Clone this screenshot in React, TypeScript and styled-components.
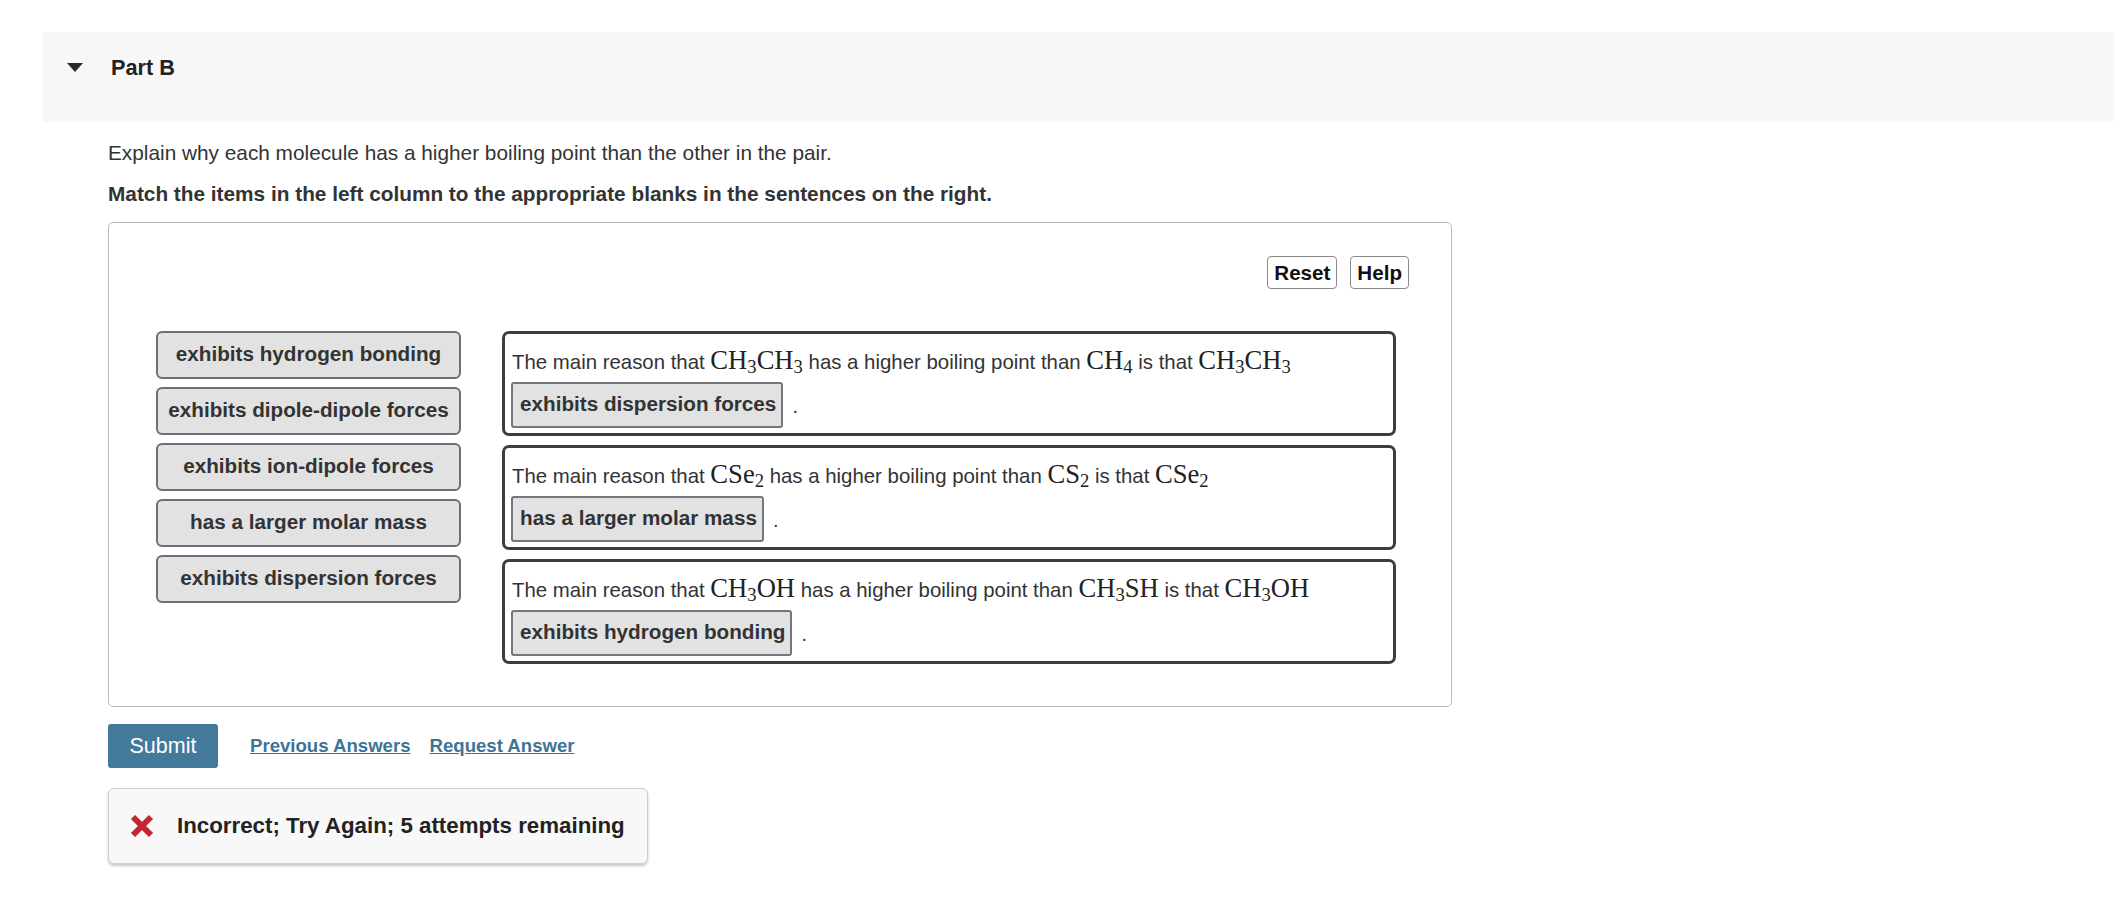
import React from "react";
import styled, { createGlobalStyle } from "styled-components";

const Global = createGlobalStyle`
  html, body { margin: 0; padding: 0; background: #fff; }
  body { font-family: "Liberation Sans", Arial, sans-serif; color: #333; }
`;

const Page = styled.div`
  padding: 32px 0 40px 43px;
`;

const PartHeader = styled.div`
  height: 90px;
  background: #f7f7f7;
  display: flex;
  align-items: flex-start;
  padding-top: 24px;
  box-sizing: border-box;
`;

const Caret = styled.span`
  display: flex;
  align-items: center;
  height: 24px;
  margin-left: 24px;
  width: 44px;
`;

const PartTitle = styled.h2`
  margin: 0;
  font-size: 21.7px;
  line-height: 24px;
  font-weight: 700;
  color: #222;
`;

const Body = styled.div`
  padding-left: 65px;
`;

const Prompt = styled.p<{ $bold?: boolean }>`
  margin: ${(p) => (p.$bold ? "17px 0 0" : "19px 0 0")};
  font-size: 20.8px;
  line-height: 24px;
  font-weight: ${(p) => (p.$bold ? 700 : 400)};
  color: #333;
`;

const MatchBox = styled.div`
  margin-top: 16px;
  width: 1344px;
  box-sizing: border-box;
  border: 1px solid #b9b9b9;
  border-radius: 5px;
  padding: 33px 42px 42px 47px;
`;

const ToolRow = styled.div`
  display: flex;
  justify-content: flex-end;
  gap: 13px;
`;

const ToolButton = styled.button`
  height: 33px;
  padding: 0 6px;
  background: #fff;
  border: 1px solid #8a8a8a;
  border-radius: 4px;
  font-family: "Liberation Sans", Arial, sans-serif;
  font-size: 20.6px;
  font-weight: 700;
  color: #111;
`;

const Columns = styled.div`
  margin-top: 42px;
  display: flex;
  gap: 41px;
  align-items: flex-start;
`;

const Choices = styled.div`
  width: 305px;
  display: flex;
  flex-direction: column;
  gap: 8px;
`;

const Choice = styled.div`
  height: 48px;
  box-sizing: border-box;
  border: 2px solid #6e6e78;
  border-radius: 6px;
  background: #e2e2e2;
  display: flex;
  align-items: center;
  justify-content: center;
  font-size: 20.7px;
  font-weight: 700;
  color: #333;
  padding-bottom: 2px;
  white-space: nowrap;
`;

const Sentences = styled.div`
  width: 894px;
  display: flex;
  flex-direction: column;
  gap: 9px;
`;

const Sentence = styled.div`
  box-sizing: border-box;
  height: 105px;
  border: 3px solid #3b3d40;
  border-radius: 7px;
  padding: 6px 8px 6px 6px;
`;

const SentenceText = styled.div`
  height: 42px;
  line-height: 40px;
  font-size: 20.4px;
  color: #333;
  padding-left: 1px;
  white-space: nowrap;
`;

const Math = styled.span`
  font-family: "Liberation Serif", "Times New Roman", serif;
  font-size: 26.6px;
  color: #222;
`;

const Sub = styled.sub`
  font-size: 0.7em;
  vertical-align: -0.24em;
  line-height: 0;
`;

const BlankRow = styled.div`
  display: flex;
  align-items: center;
  gap: 9px;
  font-size: 20px;
`;

const Blank = styled.div`
  height: 46px;
  box-sizing: border-box;
  border: 2px solid #75757d;
  border-radius: 3px;
  background: #e2e2e2;
  display: flex;
  align-items: center;
  padding: 0 5px 2px 7px;
  font-size: 20.7px;
  font-weight: 700;
  color: #333;
  white-space: nowrap;
`;

const Period = styled.span`
  color: #333;
  padding-top: 2px;
`;

const ActionRow = styled.div`
  margin-top: 17px;
  display: flex;
  align-items: center;
`;

const SubmitButton = styled.button`
  width: 110px;
  height: 44px;
  border: none;
  border-radius: 3px;
  background: #437a9b;
  color: #fff;
  font-family: "Liberation Sans", Arial, sans-serif;
  font-size: 21.5px;
  margin-right: 32px;
`;

const TextLink = styled.a<{ $gap?: number }>`
  font-size: 18.6px;
  font-weight: 700;
  color: #3d7496;
  text-decoration: underline;
  margin-right: ${(p) => p.$gap ?? 0}px;
  cursor: pointer;
`;

const Feedback = styled.div`
  margin-top: 20px;
  width: 540px;
  height: 76px;
  box-sizing: border-box;
  border: 1px solid #cfcfcf;
  border-radius: 6px;
  background: #f8f8f8;
  box-shadow: 0 2px 3px rgba(0, 0, 0, 0.22);
  display: flex;
  align-items: center;
  padding-left: 21px;
  gap: 23px;
`;

const FeedbackText = styled.span`
  font-size: 22.3px;
  font-weight: 700;
  color: #222;
`;

const C = ({ children }: { children: React.ReactNode }) => <Math>{children}</Math>;

const choices = [
  "exhibits hydrogen bonding",
  "exhibits dipole-dipole forces",
  "exhibits ion-dipole forces",
  "has a larger molar mass",
  "exhibits dispersion forces",
];

const sentences: { a: React.ReactNode; b: React.ReactNode; answer: string }[] = [
  {
    a: (
      <C>
        CH<Sub>3</Sub>CH<Sub>3</Sub>
      </C>
    ),
    b: (
      <C>
        CH<Sub>4</Sub>
      </C>
    ),
    answer: "exhibits dispersion forces",
  },
  {
    a: (
      <C>
        CSe<Sub>2</Sub>
      </C>
    ),
    b: (
      <C>
        CS<Sub>2</Sub>
      </C>
    ),
    answer: "has a larger molar mass",
  },
  {
    a: (
      <C>
        CH<Sub>3</Sub>OH
      </C>
    ),
    b: (
      <C>
        CH<Sub>3</Sub>SH
      </C>
    ),
    answer: "exhibits hydrogen bonding",
  },
];

export default function App() {
  return (
    <>
      <Global />
      <Page>
        <PartHeader>
          <Caret>
            <svg width="16" height="10" viewBox="0 0 16 10">
              <path d="M0 0 L16 0 L8 9 Z" fill="#2b2b2b" />
            </svg>
          </Caret>
          <PartTitle>Part B</PartTitle>
        </PartHeader>
        <Body>
          <Prompt>Explain why each molecule has a higher boiling point than the other in the pair.</Prompt>
          <Prompt $bold>Match the items in the left column to the appropriate blanks in the sentences on the right.</Prompt>
          <MatchBox>
            <ToolRow>
              <ToolButton>Reset</ToolButton>
              <ToolButton>Help</ToolButton>
            </ToolRow>
            <Columns>
              <Choices>
                {choices.map((c) => (
                  <Choice key={c}>{c}</Choice>
                ))}
              </Choices>
              <Sentences>
                {sentences.map((s, i) => (
                  <Sentence key={i}>
                    <SentenceText>
                      The main reason that {s.a} has a higher boiling point than {s.b} is that {s.a}
                    </SentenceText>
                    <BlankRow>
                      <Blank>{s.answer}</Blank>
                      <Period>.</Period>
                    </BlankRow>
                  </Sentence>
                ))}
              </Sentences>
            </Columns>
          </MatchBox>
          <ActionRow>
            <SubmitButton>Submit</SubmitButton>
            <TextLink $gap={19}>Previous Answers</TextLink>
            <TextLink>Request Answer</TextLink>
          </ActionRow>
          <Feedback>
            <svg width="24" height="24" viewBox="0 0 24 24">
              <path d="M3 3 L21 21 M21 3 L3 21" stroke="#c4262e" strokeWidth="6" strokeLinecap="butt" />
            </svg>
            <FeedbackText>Incorrect; Try Again; 5 attempts remaining</FeedbackText>
          </Feedback>
        </Body>
      </Page>
    </>
  );
}
